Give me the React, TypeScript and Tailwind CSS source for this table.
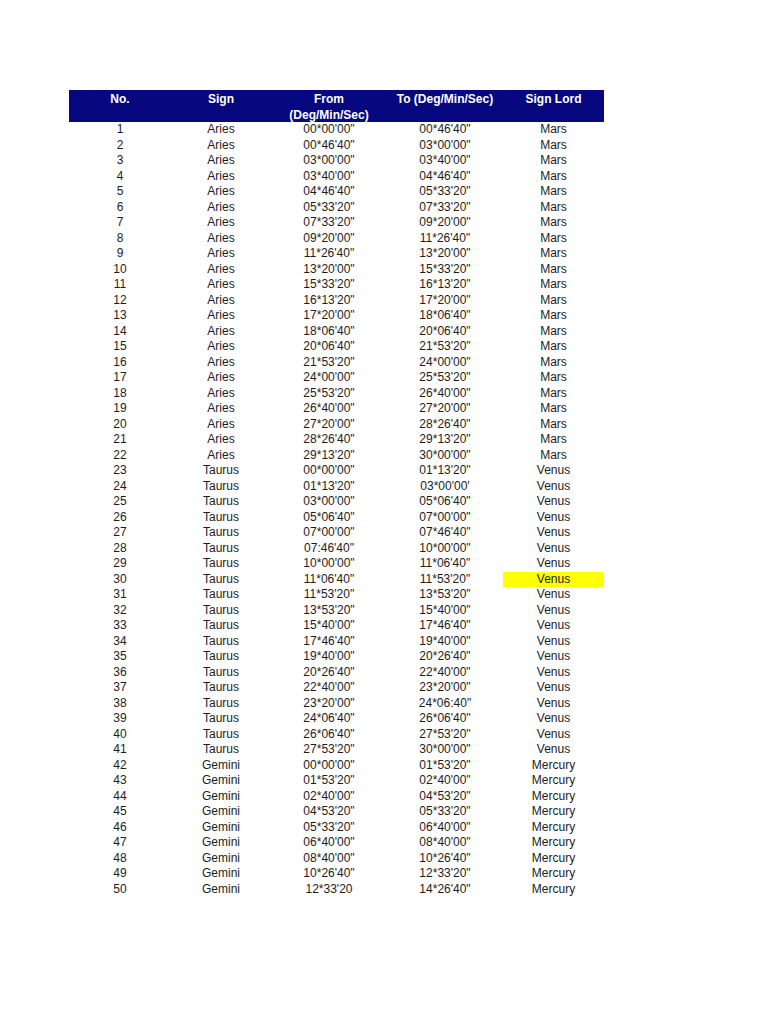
import React, { FC } from 'react'

const ROWS: [string, string, string, string][] = [
  ['Aries', `00*00'00"`, `00*46'40"`, 'Mars'],
  ['Aries', `00*46'40"`, `03*00'00"`, 'Mars'],
  ['Aries', `03*00'00"`, `03*40'00"`, 'Mars'],
  ['Aries', `03*40'00"`, `04*46'40"`, 'Mars'],
  ['Aries', `04*46'40"`, `05*33'20"`, 'Mars'],
  ['Aries', `05*33'20"`, `07*33'20"`, 'Mars'],
  ['Aries', `07*33'20"`, `09*20'00"`, 'Mars'],
  ['Aries', `09*20'00"`, `11*26'40"`, 'Mars'],
  ['Aries', `11*26'40"`, `13*20'00"`, 'Mars'],
  ['Aries', `13*20'00"`, `15*33'20"`, 'Mars'],
  ['Aries', `15*33'20"`, `16*13'20"`, 'Mars'],
  ['Aries', `16*13'20"`, `17*20'00"`, 'Mars'],
  ['Aries', `17*20'00"`, `18*06'40"`, 'Mars'],
  ['Aries', `18*06'40"`, `20*06'40"`, 'Mars'],
  ['Aries', `20*06'40"`, `21*53'20"`, 'Mars'],
  ['Aries', `21*53'20"`, `24*00'00"`, 'Mars'],
  ['Aries', `24*00'00"`, `25*53'20"`, 'Mars'],
  ['Aries', `25*53'20"`, `26*40'00"`, 'Mars'],
  ['Aries', `26*40'00"`, `27*20'00"`, 'Mars'],
  ['Aries', `27*20'00"`, `28*26'40"`, 'Mars'],
  ['Aries', `28*26'40"`, `29*13'20"`, 'Mars'],
  ['Aries', `29*13'20"`, `30*00'00"`, 'Mars'],
  ['Taurus', `00*00'00"`, `01*13'20"`, 'Venus'],
  ['Taurus', `01*13'20"`, `03*00'00'`, 'Venus'],
  ['Taurus', `03*00'00"`, `05*06'40"`, 'Venus'],
  ['Taurus', `05*06'40"`, `07*00'00"`, 'Venus'],
  ['Taurus', `07*00'00"`, `07*46'40"`, 'Venus'],
  ['Taurus', `07:46'40"`, `10*00'00"`, 'Venus'],
  ['Taurus', `10*00'00"`, `11*06'40"`, 'Venus'],
  ['Taurus', `11*06'40"`, `11*53'20"`, 'Venus'],
  ['Taurus', `11*53'20"`, `13*53'20"`, 'Venus'],
  ['Taurus', `13*53'20"`, `15*40'00"`, 'Venus'],
  ['Taurus', `15*40'00"`, `17*46'40"`, 'Venus'],
  ['Taurus', `17*46'40"`, `19*40'00"`, 'Venus'],
  ['Taurus', `19*40'00"`, `20*26'40"`, 'Venus'],
  ['Taurus', `20*26'40"`, `22*40'00"`, 'Venus'],
  ['Taurus', `22*40'00"`, `23*20'00"`, 'Venus'],
  ['Taurus', `23*20'00"`, `24*06:40"`, 'Venus'],
  ['Taurus', `24*06'40"`, `26*06'40"`, 'Venus'],
  ['Taurus', `26*06'40"`, `27*53'20"`, 'Venus'],
  ['Taurus', `27*53'20"`, `30*00'00"`, 'Venus'],
  ['Gemini', `00*00'00"`, `01*53'20"`, 'Mercury'],
  ['Gemini', `01*53'20"`, `02*40'00"`, 'Mercury'],
  ['Gemini', `02*40'00"`, `04*53'20"`, 'Mercury'],
  ['Gemini', `04*53'20"`, `05*33'20"`, 'Mercury'],
  ['Gemini', `05*33'20"`, `06*40'00"`, 'Mercury'],
  ['Gemini', `06*40'00"`, `08*40'00"`, 'Mercury'],
  ['Gemini', `08*40'00"`, `10*26'40"`, 'Mercury'],
  ['Gemini', `10*26'40"`, `12*33'20"`, 'Mercury'],
  ['Gemini', `12*33'20`, `14*26'40"`, 'Mercury'],
]

const COLS = 'grid grid-cols-[102px_100px_116px_116px_101px]'

const App: FC = () => {
  return (
    <div className="min-h-[1024px] w-[768px] bg-white pl-[69px] pt-[90px] font-['Liberation_Sans',Arial,sans-serif] text-[12px] text-[#1c1c1c]">
      <div className="w-[535px]">
        <div className={`${COLS} h-[32px] bg-[#07077f] pt-[1px] text-center font-bold leading-[16px] text-white`}>
          <p>No.</p>
          <p>Sign</p>
          <p>
            From
            <br />
            (Deg/Min/Sec)
          </p>
          <p>To (Deg/Min/Sec)</p>
          <p>Sign Lord</p>
        </div>
        {ROWS.map((row, i) => (
          <div key={i} className={`${COLS} h-[15.5px] text-center leading-[15.5px]`}>
            <p>{i + 1}</p>
            <p>{row[0]}</p>
            <p>{row[1]}</p>
            <p>{row[2]}</p>
            <p className={i === 29 ? 'bg-[#ffff00]' : ''}>{row[3]}</p>
          </div>
        ))}
      </div>
    </div>
  )
}

export default App
